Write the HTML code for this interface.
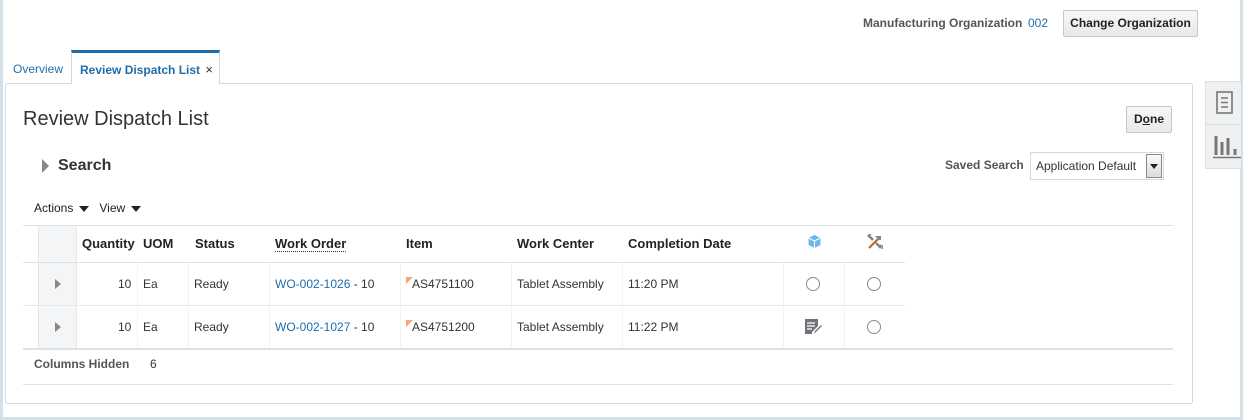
<!DOCTYPE html>
<html><head><style>
*{box-sizing:border-box;margin:0;padding:0}
body{width:1243px;height:420px;background:#fff;font-family:"Liberation Sans",Arial,sans-serif;font-size:12px;color:#333;position:relative;overflow:hidden}
.frame{position:absolute;left:0;top:0;width:1243px;height:420px;border:3px solid #d5dfe6;border-top:none;border-left-width:3px}
.abs{position:absolute}
.btn{position:absolute;background:linear-gradient(#f6f7f8,#e6e8ea);border:1px solid #c4c8cc;border-radius:2px;font-weight:bold;font-size:12px;color:#222;text-align:center}
.b{font-weight:bold}
.h{font-weight:bold;font-size:13px;color:#222}
a{color:#1f6da8;text-decoration:none}
.hl{position:absolute;height:1px;background:#dde2e6}
.vl{position:absolute;width:1px;background:#f1f3f4}
.radio{position:absolute;width:14px;height:14px;border:1px solid #8a8a8a;border-radius:50%;background:#fff}
.tri{position:absolute;width:0;height:0;border-top:5px solid transparent;border-bottom:5px solid transparent;border-left:6px solid #888}
.dd{display:inline-block;width:0;height:0;border-left:5px solid transparent;border-right:5px solid transparent;border-top:6px solid #222;vertical-align:middle;margin-left:6px}
</style></head><body>
<div class="frame"></div>
<div class="abs b" style="left:863px;top:16px;color:#555">Manufacturing Organization</div>
<div class="abs" style="left:1028px;top:16px;color:#1f6da8">002</div>
<div class="btn" style="left:1063px;top:10px;width:135px;height:27px;line-height:25px">Change Organization</div>

<div class="abs" style="left:13px;top:62px;color:#1f6da8">Overview</div>
<div class="abs" style="left:71px;top:50px;width:149px;height:34px;border:1px solid #d0d6db;border-top:3px solid #1f6da8;border-bottom:none;background:#fff;z-index:2"></div>
<div class="abs b" style="left:80px;top:62px;color:#1f6da8;z-index:3">Review Dispatch List <span style="color:#333;font-weight:normal;font-size:13px;margin-left:2px">×</span></div>

<div class="abs" style="left:5px;top:83px;width:1188px;height:321px;border:1px solid #d3d8dc;border-radius:3px"></div>

<div class="abs" style="left:1205px;top:81px;width:36px;height:88px;background:#eef0f2;border:1px solid #dde1e4;border-right:none"></div>
<div class="hl" style="left:1205px;top:124px;width:36px;background:#d5dadd"></div>
<svg class="abs" style="left:1216px;top:91px" width="18" height="24" viewBox="0 0 18 24"><rect x="1" y="1" width="15" height="21" fill="none" stroke="#777" stroke-width="1.6"/><path d="M5 7h7M5 11.5h7M5 16h7" stroke="#777" stroke-width="1.6"/></svg>
<svg class="abs" style="left:1213px;top:133px" width="28" height="26" viewBox="0 0 28 26"><path d="M3 3v19M9 9v13M15 5v17M22 16v6" stroke="#777" stroke-width="3"/><path d="M0 24.5h28" stroke="#777" stroke-width="1.5"/></svg>

<div class="abs" style="left:23px;top:108px;font-size:20px;color:#333">Review Dispatch List</div>
<div class="btn" style="left:1126px;top:106px;width:46px;height:27px;line-height:25px">D<u>o</u>ne</div>

<div class="tri" style="left:42px;top:159px;border-top-width:7px;border-bottom-width:7px;border-left-width:7px"></div>
<div class="abs b" style="left:58px;top:157px;font-size:16px;color:#333">Search</div>
<div class="abs b" style="left:945px;top:158px;color:#555">Saved Search</div>
<div class="abs" style="left:1030px;top:152px;width:134px;height:28px;border:1px solid #d5d9dc;background:#fff"></div>
<div class="abs" style="left:1036px;top:159px;color:#333">Application Default</div>
<div class="abs" style="left:1146px;top:154px;width:16px;height:24px;border:1px solid #888;background:linear-gradient(#fafafa,#ddd)"></div>
<div class="abs" style="left:1150px;top:164px;width:0;height:0;border-left:4px solid transparent;border-right:4px solid transparent;border-top:5px solid #222"></div>

<div class="abs" style="left:34px;top:201px;color:#222">Actions<span class="dd"></span><span style="margin-left:10px">View</span><span class="dd"></span></div>

<div class="hl" style="left:23px;top:225px;width:1150px"></div>
<div class="abs" style="left:38px;top:226px;width:39px;height:122px;background:#f3f5f7;border-left:1px solid #e3e7ea;border-right:1px solid #e3e7ea"></div>
<div class="hl" style="left:23px;top:262px;width:882px"></div>
<div class="hl" style="left:23px;top:305px;width:882px;background:#e6e9ec"></div>
<div class="hl" style="left:23px;top:348px;width:1150px;height:2px"></div>
<div class="hl" style="left:23px;top:384px;width:1150px"></div>
<div class="vl" style="left:137px;top:263px;height:85px"></div>
<div class="vl" style="left:188px;top:263px;height:85px"></div>
<div class="vl" style="left:269px;top:263px;height:85px"></div>
<div class="vl" style="left:400px;top:263px;height:85px"></div>
<div class="vl" style="left:511px;top:263px;height:85px"></div>
<div class="vl" style="left:622px;top:263px;height:85px"></div>
<div class="vl" style="left:783px;top:263px;height:85px"></div>
<div class="vl" style="left:844px;top:263px;height:85px"></div>

<div class="abs h" style="left:82px;top:236px">Quantity</div>
<div class="abs h" style="left:143px;top:236px">UOM</div>
<div class="abs h" style="left:195px;top:236px">Status</div>
<div class="abs h" style="left:275px;top:236px;border-bottom:1px dotted #333">Work Order</div>
<div class="abs h" style="left:406px;top:236px">Item</div>
<div class="abs h" style="left:517px;top:236px">Work Center</div>
<div class="abs h" style="left:628px;top:236px">Completion Date</div>
<svg class="abs" style="left:807px;top:234px" width="15" height="15" viewBox="0 0 15 15"><path d="M7.5 1L13.5 4v7L7.5 14 1.5 11V4z" fill="#6cb8e6"/><path d="M1.5 4l6 3 6-3M7.5 7v7" stroke="#fff" stroke-width="1" fill="none"/></svg>
<svg class="abs" style="left:867px;top:234px" width="16" height="16" viewBox="0 0 16 16"><path d="M2 2l4 4M9 9l5 5" stroke="#7b8794" stroke-width="2.5"/><path d="M1 3a2 2 0 0 1 3-2M12 12a2 2 0 0 1 3 3" stroke="#7b8794" stroke-width="1.5" fill="none"/><path d="M11 5L2 14" stroke="#c8642a" stroke-width="2.2"/><path d="M8 2h6v4l-2 0-2-2z" fill="#7b8794"/></svg>

<div class="tri" style="left:55px;top:279px;border-top-width:5px;border-bottom-width:5px;border-left-width:6px"></div>
<div class="abs" style="left:118px;top:277px">10</div>
<div class="abs" style="left:143px;top:277px">Ea</div>
<div class="abs" style="left:194px;top:277px">Ready</div>
<div class="abs" style="left:275px;top:277px"><a>WO-002-1026</a> - 10</div>
<div class="abs" style="left:406px;top:277px;width:0;height:0;border-top:7px solid #f4a878;border-right:7px solid transparent"></div>
<div class="abs" style="left:412px;top:277px">AS4751100</div>
<div class="abs" style="left:517px;top:277px">Tablet Assembly</div>
<div class="abs" style="left:628px;top:277px">11:20 PM</div>
<div class="radio" style="left:806px;top:277px"></div>
<div class="radio" style="left:867px;top:277px"></div>

<div class="tri" style="left:55px;top:322px;border-top-width:5px;border-bottom-width:5px;border-left-width:6px"></div>
<div class="abs" style="left:118px;top:320px">10</div>
<div class="abs" style="left:143px;top:320px">Ea</div>
<div class="abs" style="left:194px;top:320px">Ready</div>
<div class="abs" style="left:275px;top:320px"><a>WO-002-1027</a> - 10</div>
<div class="abs" style="left:406px;top:320px;width:0;height:0;border-top:7px solid #f4a878;border-right:7px solid transparent"></div>
<div class="abs" style="left:412px;top:320px">AS4751200</div>
<div class="abs" style="left:517px;top:320px">Tablet Assembly</div>
<div class="abs" style="left:628px;top:320px">11:22 PM</div>
<svg class="abs" style="left:805px;top:319px" width="17" height="16" viewBox="0 0 17 16"><path d="M0 0h13v7l-6 6v2H0z" fill="#707478"/><path d="M2 4h8M2 7h8M2 10h5" stroke="#fff" stroke-width="1.2"/><path d="M9 15l1-3 6-6 1 1-6 6z" fill="#707478"/></svg>
<div class="radio" style="left:867px;top:320px"></div>

<div class="abs b" style="left:34px;top:357px;color:#555">Columns Hidden</div>
<div class="abs" style="left:150px;top:357px">6</div>
</body></html>
